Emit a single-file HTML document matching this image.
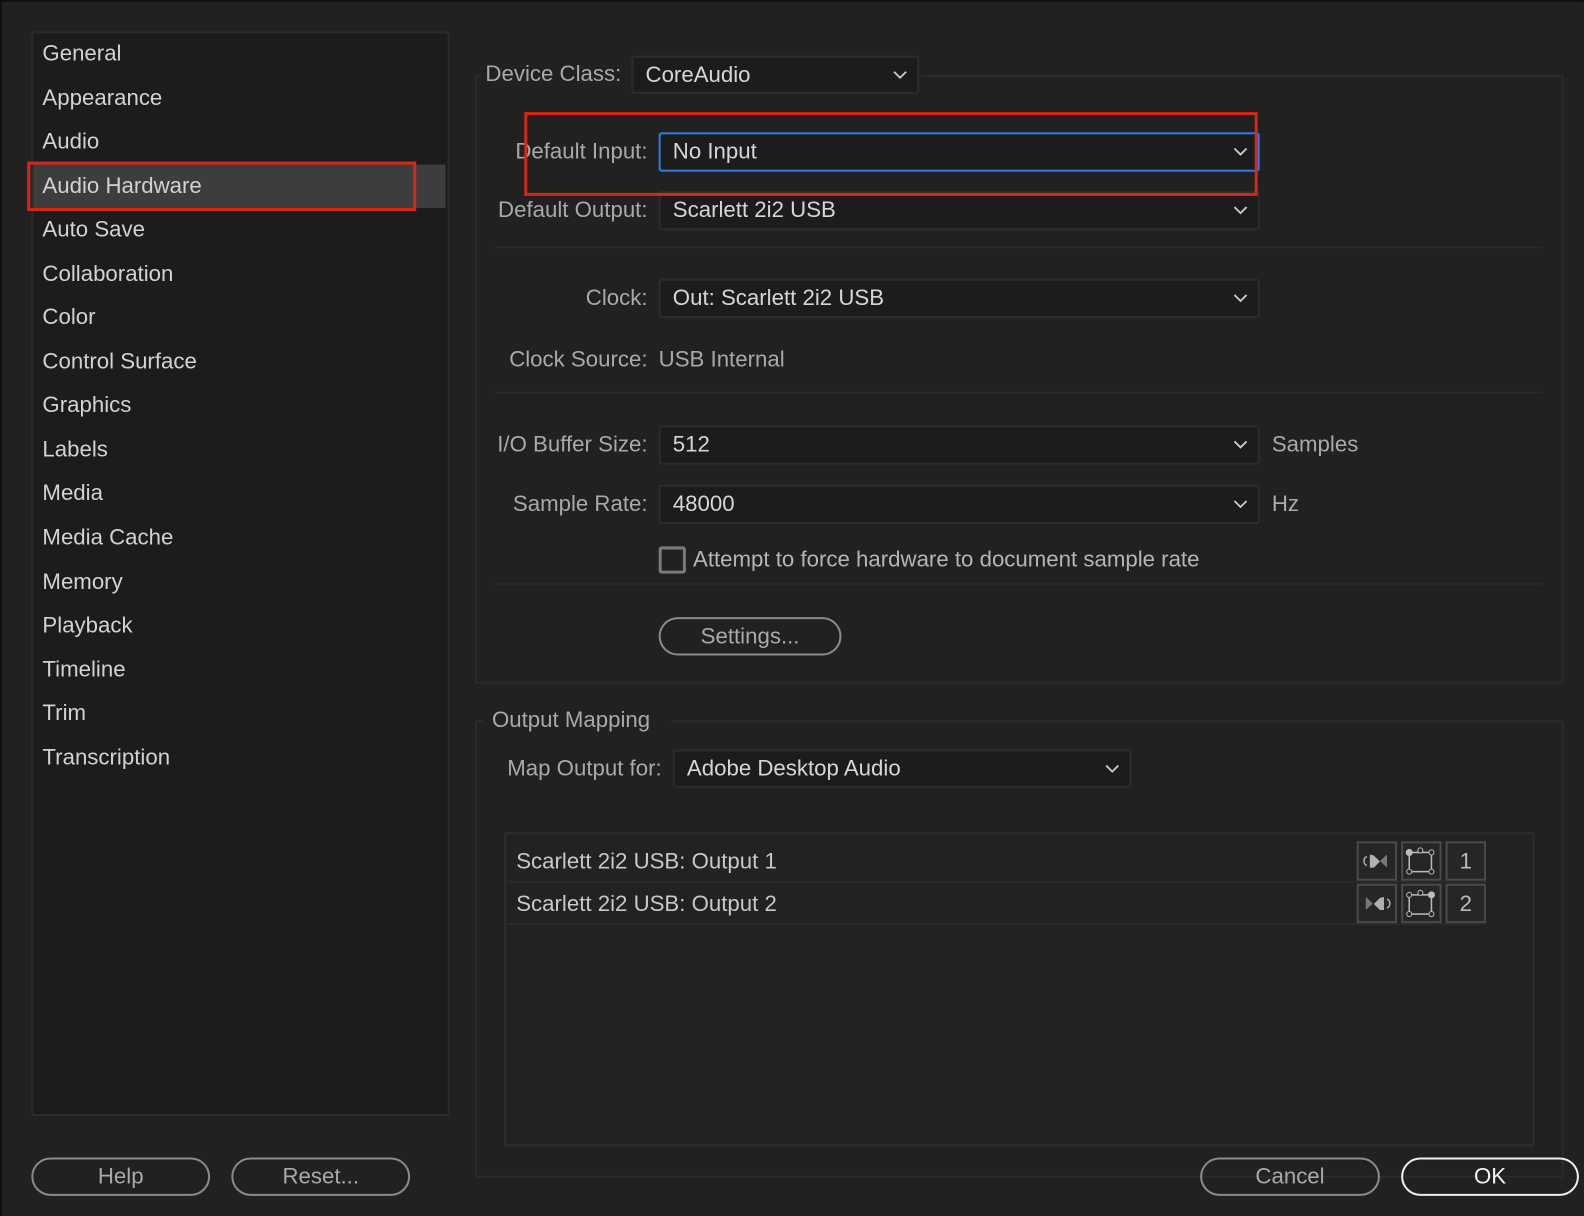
<!DOCTYPE html>
<html><head><meta charset="utf-8"><style>
*{box-sizing:border-box;margin:0;padding:0}
html,body{width:1584px;height:1216px;overflow:hidden;background:#212121}
#w{width:1568px;height:1204px;transform:scale(1.0102,1.01);transform-origin:0 0;position:relative;font-family:"Liberation Sans",sans-serif;font-size:22px;color:#d4d4d4}
.a{position:absolute}
.lbl{position:absolute;color:#a9a9a9;text-align:right;white-space:nowrap;line-height:38px}
.dd{position:absolute;background:#1c1c1c;border:2px solid #2c2c2c;border-radius:3px;color:#d6d6d6;padding-left:12px;line-height:34px;white-space:nowrap}
.dd svg{position:absolute;right:10px;top:12px}
.sep{position:absolute;height:2px;background:#2a2a2a}
.btn{position:absolute;border:2px solid #8a8a8a;border-radius:19px;color:#a9a9a9;text-align:center;line-height:34px;height:38px}
.li{position:absolute;left:42px;color:#d2d2d2;line-height:30px}
.ib{position:absolute;width:40px;height:39px;border:2px solid #4a4a4a;background:#262626}
.red{position:absolute;border:3px solid #d5281b;z-index:5}
</style></head><body><div id="w">
<div class="a" style="left:0;top:0;width:1568px;height:2px;background:#111"></div>
<div class="a" style="left:0;top:0;width:2px;height:1204px;background:#111"></div>
<div class="a" style="left:31px;top:31px;width:414px;height:1074px;background:#1c1c1c;border:2px solid #2b2b2b;border-radius:3px"></div>
<div class="a" style="left:33px;top:163px;width:408px;height:43px;background:#3d3d3d"></div>
<div class="red" style="left:27px;top:160px;width:385px;height:49px"></div>
<div class="li" style="top:38px">General</div>
<div class="li" style="top:82px">Appearance</div>
<div class="li" style="top:125px">Audio</div>
<div class="li" style="top:169px">Audio Hardware</div>
<div class="li" style="top:212px">Auto Save</div>
<div class="li" style="top:256px">Collaboration</div>
<div class="li" style="top:299px">Color</div>
<div class="li" style="top:343px">Control Surface</div>
<div class="li" style="top:386px">Graphics</div>
<div class="li" style="top:430px">Labels</div>
<div class="li" style="top:473px">Media</div>
<div class="li" style="top:517px">Media Cache</div>
<div class="li" style="top:561px">Memory</div>
<div class="li" style="top:604px">Playback</div>
<div class="li" style="top:648px">Timeline</div>
<div class="li" style="top:691px">Trim</div>
<div class="li" style="top:735px">Transcription</div>
<div class="a" style="left:470px;top:74px;width:1078px;height:603px;border:2px solid #2b2b2b;border-radius:3px"></div>
<div class="a" style="left:476px;top:60px;width:436px;height:30px;background:#212121"></div>
<div class="lbl" style="right:953px;top:54px">Device Class:</div>
<div class="dd" style="left:625px;top:55px;width:285px;height:38px">CoreAudio<svg width="14" height="10"><path d="M1 2l6 6 6-6" stroke="#ccc" stroke-width="1.8" fill="none"/></svg></div>
<div class="lbl" style="right:927px;top:131px">Default Input:</div>
<div class="dd" style="left:652px;top:131px;width:595px;height:39px;border-color:#2e7ae0">No Input<svg width="14" height="10"><path d="M1 2l6 6 6-6" stroke="#ccc" stroke-width="1.8" fill="none"/></svg></div>
<div class="red" style="left:519px;top:111px;width:726px;height:83px"></div>
<div class="lbl" style="right:927px;top:189px">Default Output:</div>
<div class="dd" style="left:652px;top:189px;width:595px;height:39px">Scarlett 2i2 USB<svg width="14" height="10"><path d="M1 2l6 6 6-6" stroke="#ccc" stroke-width="1.8" fill="none"/></svg></div>
<div class="sep" style="left:490px;top:244px;width:1037px"></div>
<div class="lbl" style="right:927px;top:276px">Clock:</div>
<div class="dd" style="left:652px;top:276px;width:595px;height:39px">Out: Scarlett 2i2 USB<svg width="14" height="10"><path d="M1 2l6 6 6-6" stroke="#ccc" stroke-width="1.8" fill="none"/></svg></div>
<div class="lbl" style="right:927px;top:337px">Clock Source:</div>
<div class="lbl" style="left:652px;top:337px">USB Internal</div>
<div class="sep" style="left:490px;top:388px;width:1037px"></div>
<div class="lbl" style="right:927px;top:421px">I/O Buffer Size:</div>
<div class="dd" style="left:652px;top:421px;width:595px;height:39px">512<svg width="14" height="10"><path d="M1 2l6 6 6-6" stroke="#ccc" stroke-width="1.8" fill="none"/></svg></div>
<div class="lbl" style="left:1259px;top:421px">Samples</div>
<div class="lbl" style="right:927px;top:480px">Sample Rate:</div>
<div class="dd" style="left:652px;top:480px;width:595px;height:39px">48000<svg width="14" height="10"><path d="M1 2l6 6 6-6" stroke="#ccc" stroke-width="1.8" fill="none"/></svg></div>
<div class="lbl" style="left:1259px;top:480px">Hz</div>
<div class="a" style="left:652px;top:541px;width:27px;height:27px;border:3px solid #7a7a7a;border-radius:3px"></div>
<div class="lbl" style="left:686px;top:535px;color:#b5b5b5">Attempt to force hardware to document sample rate</div>
<div class="sep" style="left:490px;top:577px;width:1037px"></div>
<div class="btn" style="left:652px;top:611px;width:181px">Settings...</div>
<div class="a" style="left:470px;top:713px;width:1078px;height:453px;border:2px solid #2b2b2b;border-radius:3px"></div>
<div class="a" style="left:478px;top:700px;width:186px;height:30px;background:#212121"></div>
<div class="lbl" style="left:487px;top:694px">Output Mapping</div>
<div class="lbl" style="right:913px;top:742px">Map Output for:</div>
<div class="dd" style="left:666px;top:742px;width:454px;height:38px">Adobe Desktop Audio<svg width="14" height="10"><path d="M1 2l6 6 6-6" stroke="#ccc" stroke-width="1.8" fill="none"/></svg></div>
<div class="a" style="left:499px;top:824px;width:1020px;height:311px;border:2px solid #2e2e2e;background:#222"></div>
<div class="sep" style="left:501px;top:872px;width:970px"></div>
<div class="sep" style="left:501px;top:914px;width:970px"></div>
<div class="lbl" style="left:511px;top:834px;color:#c8c8c8">Scarlett 2i2 USB: Output 1</div>
<div class="lbl" style="left:511px;top:876px;color:#c8c8c8">Scarlett 2i2 USB: Output 2</div>
<div class="ib" style="left:1343px;top:833px"><svg width="36" height="35"><path d="M11 11v13h4l6-6-6-6z" fill="#b0b0b0"/><path d="M28 11v13l-7-6.5z" fill="#777"/><path d="M8 13a5 5 0 0 0 0 9" stroke="#aaa" stroke-width="1.5" fill="none"/></svg></div>
<div class="ib" style="left:1387px;top:833px"><svg width="36" height="35"><rect x="6" y="9" width="22" height="19" stroke="#bbb" fill="none" stroke-width="1.5"/><circle cx="6" cy="9" r="3.5" fill="#bbb"/><circle cx="28" cy="9" r="2.5" fill="#262626" stroke="#bbb"/><circle cx="17" cy="7" r="2.5" fill="#262626" stroke="#bbb"/><circle cx="6" cy="28" r="2.5" fill="#262626" stroke="#bbb"/><circle cx="28" cy="28" r="2.5" fill="#262626" stroke="#bbb"/></svg></div>
<div class="ib" style="left:1431px;top:833px;color:#bbb;text-align:center;line-height:35px">1</div>
<div class="ib" style="left:1343px;top:875px"><svg width="36" height="35"><path d="M7 11v13l7-6.5z" fill="#777"/><path d="M25 11v13h-4l-6-6 6-6z" fill="#b0b0b0"/><path d="M28 13a5 5 0 0 1 0 9" stroke="#aaa" stroke-width="1.5" fill="none"/></svg></div>
<div class="ib" style="left:1387px;top:875px"><svg width="36" height="35"><rect x="6" y="9" width="22" height="19" stroke="#bbb" fill="none" stroke-width="1.5"/><circle cx="28" cy="9" r="3.5" fill="#bbb"/><circle cx="6" cy="9" r="2.5" fill="#262626" stroke="#bbb"/><circle cx="17" cy="7" r="2.5" fill="#262626" stroke="#bbb"/><circle cx="6" cy="28" r="2.5" fill="#262626" stroke="#bbb"/><circle cx="28" cy="28" r="2.5" fill="#262626" stroke="#bbb"/></svg></div>
<div class="ib" style="left:1431px;top:875px;color:#bbb;text-align:center;line-height:35px">2</div>
<div class="btn" style="left:31px;top:1146px;width:177px">Help</div>
<div class="btn" style="left:229px;top:1146px;width:177px">Reset...</div>
<div class="btn" style="left:1188px;top:1146px;width:178px">Cancel</div>
<div class="btn" style="left:1387px;top:1146px;width:176px;border-color:#eee;color:#f2f2f2">OK</div>
</div></body></html>
